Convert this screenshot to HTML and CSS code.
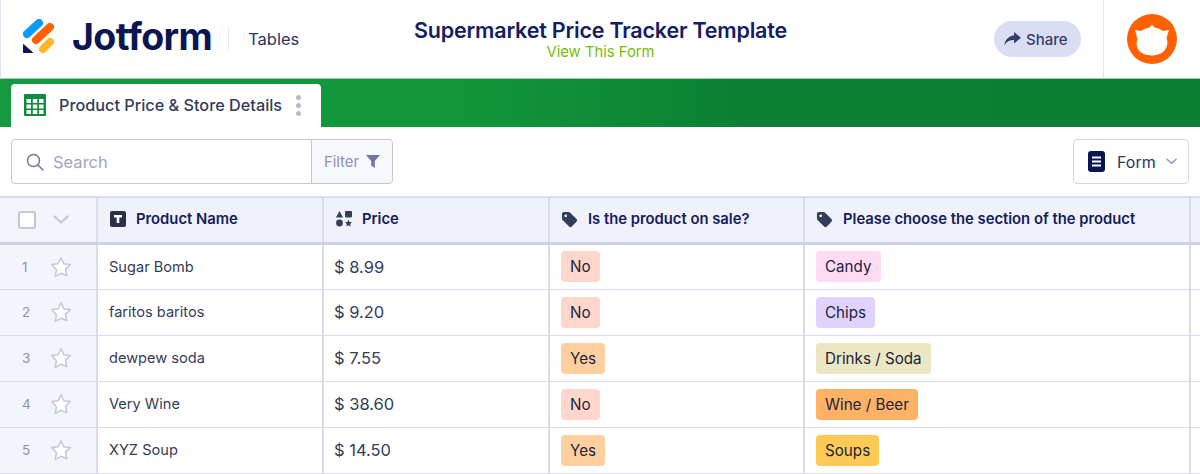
FILE: index.html
```html
<!DOCTYPE html>
<html lang="en">
<head>
  <meta charset="UTF-8">
  <meta name="viewport" content="width=device-width, initial-scale=1.0">
  <title>Supermarket Price Tracker Template</title>
  <link rel="stylesheet" href="styles.css">
</head>
<body>
  <svg class="sprites" width="0" height="0" aria-hidden="true">
    <symbol id="star" viewBox="0 0 22 22">
      <path d="M11 1.8l2.8 6 6.5.8-4.8 4.5 1.3 6.5L11 17.3l-5.800 3.100 1.300-6.500L1.700 8.600l6.500-.8z" fill="#fff" stroke="#c3c6d6" stroke-width="1.500" stroke-linejoin="round"/>
    </symbol>
    <symbol id="tag" viewBox="0 0 18 18">
      <path d="M1 3a2 2 0 0 1 2-2h5a2 2 0 0 1 1.400.6l7 7a2 2 0 0 1 0 2.800l-5 5a2 2 0 0 1-2.800 0l-7-7A2 2 0 0 1 1 8zM5 3.600a1.500 1.500 0 1 0 0 3 1.500 1.500 0 0 0 0-3z" fill="#343c5a" fill-rule="evenodd"/>
    </symbol>
  </svg>

  <header class="topbar">
    <div class="brand">
      <svg class="logo" width="32" height="35" viewBox="0 0 32 35">
        <path d="M4 15L16 4" stroke="#0a9bff" stroke-width="8" stroke-linecap="round"/>
        <path d="M13 21L27 8" stroke="#ff6100" stroke-width="8" stroke-linecap="round"/>
        <path d="M20 30L27 23" stroke="#ffb629" stroke-width="8" stroke-linecap="round"/>
        <path d="M.5 25.500V33.500h9z" fill="#0a1551" stroke="#0a1551" stroke-linejoin="round"/>
      </svg>
      <span class="wordmark">Jotform</span>
      <span class="product">Tables</span>
    </div>
    <div class="title-block">
      <div class="title">Supermarket Price Tracker Template</div>
      <a class="view-link">View This Form</a>
    </div>
    <div class="actions">
      <div class="share-wrap">
        <button class="share">
          <svg width="17" height="14" viewBox="0 0 17 14"><path d="M10 0l7 5.800-7 5.700V8C6 7.800 2.500 9.500.3 13.500.8 8 4.500 3.800 10 3.400z" fill="#343c6a"/></svg>
          Share
        </button>
      </div>
      <div class="avatar-wrap">
        <svg width="50" height="50" viewBox="0 0 50 50">
          <circle cx="25" cy="25" r="25" fill="#ff6100"/>
          <path d="M8 16l6 1c2-1.500 5-2.800 8-3.200L25 11l3 2.800c3 .4 6 1.700 8 3.200l6-1-2.500 8c.6 1.500.9 3 .9 4.500 0 8-7 13-15.400 13S9.600 37.500 9.600 29.500c0-1.500.3-3 .9-4.500z" fill="#fff"/>
        </svg>
      </div>
    </div>
  </header>

  <nav class="tabstrip">
    <div class="tab">
      <svg width="24" height="24" viewBox="0 0 24 24">
        <rect x="1" y="1" width="22" height="22" rx="1" fill="#0f8c3c"/>
        <g fill="#fff">
          <rect x="3.500" y="6" width="4.500" height="4"/><rect x="9.800" y="6" width="4.500" height="4"/><rect x="16" y="6" width="4.500" height="4"/>
          <rect x="3.500" y="11.500" width="4.500" height="4"/><rect x="9.800" y="11.500" width="4.500" height="4"/><rect x="16" y="11.500" width="4.500" height="4"/>
          <rect x="3.500" y="17" width="4.500" height="4"/><rect x="9.800" y="17" width="4.500" height="4"/><rect x="16" y="17" width="4.500" height="4"/>
        </g>
      </svg>
      <span class="tab-name">Product Price &amp; Store Details</span>
      <span class="tab-dots"><i></i><i></i><i></i></span>
    </div>
  </nav>

  <section class="toolbar">
    <div class="searchbox">
      <div class="search-field">
        <svg width="18" height="18" viewBox="0 0 18 18" fill="none" stroke="#6f76a7" stroke-width="1.500" stroke-linecap="round"><circle cx="7.500" cy="7.500" r="6"/><path d="M12 12l5 5"/></svg>
        <span>Search</span>
      </div>
      <div class="filter">
        Filter
        <svg width="14" height="13" viewBox="0 0 14 13"><path d="M0 0h14L8.800 6v7L5.200 10.500V6z" fill="#6f76a7"/></svg>
      </div>
    </div>
    <button class="view-btn">
      <svg width="17" height="21" viewBox="0 0 17 21"><rect width="17" height="21" rx="3" fill="#0a1551"/><path d="M4 6.500h9M4 10.500h9M4 14.500h9" stroke="#fff" stroke-width="2"/></svg>
      <span>Form</span>
      <svg width="11" height="7" viewBox="0 0 12 7" fill="none" stroke="#8d92b2" stroke-width="1.500" stroke-linecap="round" stroke-linejoin="round"><path d="M1 1l5 4.500L11 1"/></svg>
    </button>
  </section>

  <table class="grid">
    <colgroup>
      <col class="c-side"><col class="c-name"><col class="c-price"><col class="c-sale"><col class="c-section"><col>
    </colgroup>
    <thead>
      <tr>
        <th class="side">
          <div class="side-inner">
            <span class="checkbox"></span>
            <svg width="16" height="9" viewBox="0 0 16 9" fill="none" stroke="#c3c6d6" stroke-width="2.200" stroke-linecap="round" stroke-linejoin="round"><path d="M1.500 1.500L8 7.500l6.500-6"/></svg>
          </div>
        </th>
        <th>
          <div class="head nudge">
            <svg width="16" height="16" viewBox="0 0 16 16"><rect width="16" height="16" rx="2" fill="#2b3048"/><path d="M4 4h8v2.500H9.300V12H6.700V6.500H4z" fill="#fff"/></svg>
            Product Name
          </div>
        </th>
        <th>
          <div class="head nudge">
            <svg width="16" height="16" viewBox="0 0 16 16" fill="#343c5a"><path d="M3.500 0L7 6.500H0z"/><rect x="9" y="0" width="7" height="6.500" rx="1"/><circle cx="3.500" cy="12" r="3.400"/><path d="M12.500 8.700l1.100 2.300 2.400.3-1.800 1.700.5 2.500-2.200-1.200-2.200 1.200.5-2.500L9 11.300l2.400-.3z"/></svg>
            Price
          </div>
        </th>
        <th><div class="head"><svg width="17" height="17"><use href="#tag"/></svg>Is the product on sale?</div></th>
        <th><div class="head"><svg width="17" height="17"><use href="#tag"/></svg>Please choose the section of the product</div></th>
        <th></th>
      </tr>
    </thead>
    <tbody>
      <tr>
        <td class="side"><div class="side-inner"><span class="num">1</span><svg width="22" height="22"><use href="#star"/></svg></div></td>
        <td>Sugar Bomb</td>
        <td class="price">$ 8.99</td>
        <td><span class="pill no">No</span></td>
        <td><span class="pill candy">Candy</span></td>
        <td></td>
      </tr>
      <tr>
        <td class="side"><div class="side-inner"><span class="num">2</span><svg width="22" height="22"><use href="#star"/></svg></div></td>
        <td>faritos baritos</td>
        <td class="price">$ 9.20</td>
        <td><span class="pill no">No</span></td>
        <td><span class="pill chips">Chips</span></td>
        <td></td>
      </tr>
      <tr>
        <td class="side"><div class="side-inner"><span class="num">3</span><svg width="22" height="22"><use href="#star"/></svg></div></td>
        <td>dewpew soda</td>
        <td class="price">$ 7.55</td>
        <td><span class="pill yes">Yes</span></td>
        <td><span class="pill drinks">Drinks / Soda</span></td>
        <td></td>
      </tr>
      <tr>
        <td class="side"><div class="side-inner"><span class="num">4</span><svg width="22" height="22"><use href="#star"/></svg></div></td>
        <td>Very Wine</td>
        <td class="price">$ 38.60</td>
        <td><span class="pill no">No</span></td>
        <td><span class="pill wine">Wine / Beer</span></td>
        <td></td>
      </tr>
      <tr>
        <td class="side"><div class="side-inner"><span class="num">5</span><svg width="22" height="22"><use href="#star"/></svg></div></td>
        <td>XYZ Soup</td>
        <td class="price">$ 14.50</td>
        <td><span class="pill yes">Yes</span></td>
        <td><span class="pill soups">Soups</span></td>
        <td></td>
      </tr>
    </tbody>
  </table>
</body>
</html>
```

FILE: styles.css
```css
* {
  box-sizing: border-box;
}

html,
body {
  height: 474px;
  overflow: hidden;
}

body {
  margin: 0;
  background: #fff;
  color: #0a1551;
  font-family: "Inter", "Liberation Sans", sans-serif;
}

.sprites {
  display: block;
  height: 0;
}

/* top bar */
.topbar {
  display: grid;
  grid-template-columns: 1fr auto 1fr;
  height: 79px;
  border-left: 1px solid #dfe3f0;
  border-bottom: 1px solid #9fcbaf;
}

.brand {
  display: flex;
  align-items: center;
  padding: 0 0 5px 22px;
}

.wordmark {
  margin-left: 17px;
  font-size: 37.500px;
  font-weight: 700;
  letter-spacing: -0.6px;
}

.product {
  margin: 4px 0 0 16px;
  padding-left: 19px;
  border-left: 1px solid #e3e5f0;
  font-size: 16.500px;
  line-height: 24px;
  color: #2b3560;
}

.title-block {
  padding-top: 17px;
  text-align: center;
}

.title {
  font-size: 21.500px;
  font-weight: 600;
  line-height: 26px;
  letter-spacing: -0.2px;
  color: #14205e;
}

.view-link {
  display: block;
  font-size: 14.800px;
  line-height: 18px;
  color: #78bb07;
}

.actions {
  display: flex;
  justify-content: flex-end;
}

.share-wrap {
  padding: 21px 22px 0 0;
}

.share {
  display: flex;
  align-items: center;
  gap: 5px;
  width: 87px;
  height: 36px;
  padding: 0 0 0 10px;
  border: none;
  border-radius: 18px;
  background: #dadef3;
  color: #343c6a;
  font-family: inherit;
  font-size: 15px;
  font-weight: 500;
}

.avatar-wrap {
  display: flex;
  justify-content: center;
  width: 97px;
  padding-top: 14px;
  border-left: 1px solid #e3e5f0;
}

/* green strip with the tab */
.tabstrip {
  height: 48px;
  padding: 5px 0 0 11px;
  background: linear-gradient(90deg, #14993f 0%, #119539 40%, #0b8034 62%, #0a7f34 100%);
}

.tab {
  display: flex;
  align-items: center;
  width: 310px;
  height: 43px;
  padding: 0 0 1px 12px;
  border-radius: 4px 4px 0 0;
  background: #fff;
}

.tab-name {
  margin-left: 12px;
  font-size: 16.250px;
  font-weight: 500;
  color: #343c5a;
}

.tab-dots {
  display: flex;
  flex-direction: column;
  gap: 3px;
  margin-left: 14px;
}

.tab-dots i {
  width: 5px;
  height: 5px;
  border-radius: 50%;
  background: #b5b8cc;
}

/* search + view selector */
.toolbar {
  display: flex;
  justify-content: space-between;
  height: 69px;
  padding: 12px 11px 0;
}

.searchbox {
  display: flex;
  width: 382px;
  height: 45px;
  border: 1px solid #c3c6dc;
  border-radius: 4px;
}

.search-field {
  display: flex;
  flex: 1;
  align-items: center;
  gap: 9px;
  padding-left: 14px;
  font-size: 16.500px;
  color: #a0a5c2;
}

.filter {
  display: flex;
  align-items: center;
  gap: 7px;
  width: 81px;
  padding-left: 12px;
  border-left: 1px solid #c3c6dc;
  border-radius: 0 4px 4px 0;
  background: #f7f8fc;
  font-size: 14.800px;
  color: #8d92b2;
}

.view-btn {
  display: flex;
  align-items: center;
  width: 116px;
  height: 45px;
  padding: 0 0 0 14px;
  border: 1px solid #d3d6e6;
  border-radius: 4px;
  background: #fff;
  color: #2b3560;
  font-family: inherit;
  font-size: 16px;
}

.view-btn span {
  margin: 0 10px 0 12px;
}

/* table */
.grid {
  width: 1200px;
  border-collapse: collapse;
  table-layout: fixed;
}

.c-side {
  width: 97px;
}

.c-name,
.c-price {
  width: 226px;
}

.c-sale {
  width: 255px;
}

.c-section {
  width: 386px;
}

th,
td {
  padding: 0 0 0 11px;
  border: 1px solid #d9dcea;
  border-left: 0;
  border-right: 2px solid #d9dcea;
  font-size: 14.600px;
}

td:last-child,
th:last-child {
  border-right: 0;
}

th {
  height: 46px;
  border-top: 2px solid #d9dcea;
  border-bottom: 3px solid #ccd2e3;
  background: #f0f2fb;
  text-align: left;
  font-size: 14.800px;
  font-weight: 600;
  color: #14205e;
}

td {
  height: 46px;
  color: #343c5a;
}

th.side,
td.side {
  padding: 0;
  background: #f3f4fc;
}

.side-inner {
  display: flex;
  align-items: center;
  padding-left: 18px;
}

.checkbox {
  width: 18px;
  height: 18px;
  margin-right: 17px;
  border: 2px solid #c3c6d6;
  border-radius: 3px;
  background: #fff;
}

.num {
  width: 32px;
  padding-left: 4px;
  font-size: 13.500px;
  color: #8d92b2;
}

.head {
  display: flex;
  align-items: center;
  gap: 10px;
  padding-bottom: 1px;
}

.head.nudge {
  padding-left: 1px;
}

td.price {
  padding-left: 10px;
  font-size: 16.500px;
}

.pill {
  display: inline-block;
  padding: 0 9px;
  border-radius: 4px;
  font-size: 15.200px;
  line-height: 31px;
  color: #20243a;
  vertical-align: middle;
}

.no { background: #ffd6cc; }
.yes { background: #ffcf9f; }
.candy { background: #ffdaf3; }
.chips { background: #dfd2fd; }
.drinks { background: #ebe6c3; }
.wine { background: #ffb266; }
.soups { background: #fdcb55; }
```
